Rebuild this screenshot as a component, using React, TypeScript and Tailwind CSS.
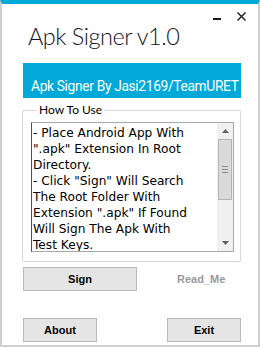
import React from 'react';

const helpLines = [
  '- Place Android App With',
  '".apk" Extension In Root',
  'Directory.',
  '- Click "Sign" Will Search',
  'The Root Folder With',
  'Extension ".apk" If Found',
  'Will Sign The Apk With',
  'Test Keys.',
];

const Button: React.FC<{ label: string; className?: string }> = ({ label, className }) => (
  <button
    className={`h-[24px] bg-[#e5e5e5] border border-[#b9b9b9] text-[11px] font-bold text-black font-['Liberation_Sans',sans-serif] ${className ?? ''}`}
  >
    {label}
  </button>
);

export default function App() {
  return (
    <div className="w-[260px] h-[347px] bg-white flex flex-col border-t-[4px] border-t-[#00a9d7] border-x-[2px] border-b-[2px] border-x-[#cfcfcf] border-b-[#cfcfcf] pl-[21px] pr-[17px] font-['Lato',sans-serif] overflow-hidden">
      {/* window controls */}
      <div className="flex justify-end items-start gap-[16px] mt-[8px] -mr-[5px] h-[9px]">
        <svg width="8" height="9" viewBox="0 0 8 9">
          <rect x="0" y="6" width="8" height="2" fill="#1a1a1a" />
        </svg>
        <svg width="9" height="9" viewBox="0 0 9 9">
          <path d="M0.5 0.5 L8.5 8.5 M8.5 0.5 L0.5 8.5" stroke="#1a1a1a" strokeWidth="1.4" />
        </svg>
      </div>

      <h1 className="mt-[1px] ml-[5px] text-[23.5px] leading-[28px] tracking-[-0.5px] font-light text-[#141428] whitespace-nowrap">
        Apk Signer v1.0
      </h1>

      {/* banner */}
      <div className="mt-[13px] h-[35px] bg-[#00a9d7] flex items-end pl-[8px] pb-[3px]">
        <span className="font-['Roboto',sans-serif] text-[13.8px] leading-[18px] tracking-[-0.35px] text-white whitespace-nowrap">
          Apk Signer By Jasi2169/TeamURET
        </span>
      </div>

      {/* group box */}
      <fieldset className="mt-[5px] -ml-[1px] border border-[#d8d8d8] rounded-[2px] pl-[8px] pr-[6px] pb-[9px]">
        <legend className="ml-[6px] px-[2px] text-[12px] leading-[14px] text-black">How To Use</legend>
        <div className="mt-[5px] h-[130px] flex border border-[#a8a8a8] border-l-[#505050] bg-white">
          <div className="flex-1 pl-[1px] pt-[2px] overflow-hidden font-['DejaVu_Sans',sans-serif] text-[12.2px] leading-[16px] text-black whitespace-nowrap">
            {helpLines.map((line) => (
              <div key={line}>{line}</div>
            ))}
          </div>
          {/* scrollbar */}
          <div className="w-[16px] bg-[#f0f0f0] flex flex-col items-center">
            <div className="h-[16px] flex items-center justify-center">
              <svg width="7" height="4" viewBox="0 0 7 4">
                <path d="M0 4 L3.5 0 L7 4 Z" fill="#606060" />
              </svg>
            </div>
            <div className="w-[14px] h-[61px] bg-[#dadada] border border-[#b4b4b4] flex flex-col items-center justify-center gap-[2px]">
              <div className="w-[6px] h-px bg-[#8c8c8c]" />
              <div className="w-[6px] h-px bg-[#8c8c8c]" />
              <div className="w-[6px] h-px bg-[#8c8c8c]" />
            </div>
            <div className="flex-1" />
            <div className="h-[16px] flex items-center justify-center">
              <svg width="7" height="4" viewBox="0 0 7 4">
                <path d="M0 0 L3.5 4 L7 0 Z" fill="#606060" />
              </svg>
            </div>
          </div>
        </div>
      </fieldset>

      {/* sign row */}
      <div className="mt-[5px] flex items-center">
        <Button label="Sign" className="w-[114px]" />
        <span className="ml-[40px] text-[11px] font-bold text-[#9a9a9a] font-['Liberation_Sans',sans-serif]">Read_Me</span>
      </div>

      {/* bottom row */}
      <div className="mt-[27px] flex justify-between">
        <Button label="About" className="w-[74px]" />
        <Button label="Exit" className="w-[74px]" />
      </div>
    </div>
  );
}
